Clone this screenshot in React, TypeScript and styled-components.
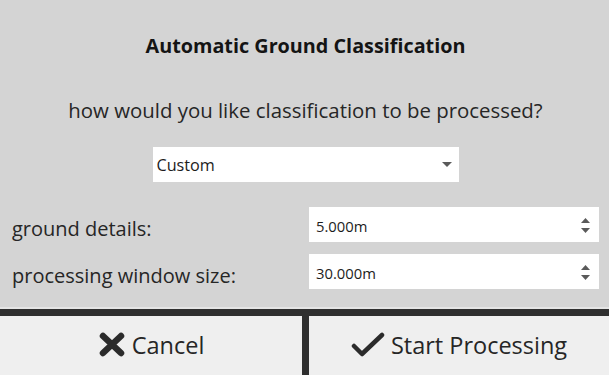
import React from 'react';
import styled, { createGlobalStyle } from 'styled-components';

const GlobalStyle = createGlobalStyle`
  html, body {
    margin: 0;
    padding: 0;
    width: 100%;
    height: 100%;
    overflow: hidden;
  }
  #root {
    width: 100%;
    height: 100%;
  }
  * {
    box-sizing: border-box;
  }
`;

const StyledDialog = styled.div`
  display: flex;
  flex-direction: column;
  width: 609px;
  height: 375px;
  background-color: #d4d4d4;
  font-family: 'Open Sans', 'Noto Sans', sans-serif;
  color: #1c1c1c;
`;

const StyledBody = styled.div`
  flex: 1;
  display: flex;
  flex-direction: column;
  align-items: center;
  padding: 34px 10px 0 12px;
`;

const StyledTitle = styled.h1`
  margin: 0;
  font-size: 19.8px;
  font-weight: 700;
  line-height: 24px;
  color: #141414;
`;

const StyledQuestion = styled.p`
  margin: 40px 0 0;
  font-size: 20.4px;
  line-height: 24px;
  color: #262626;
`;

const StyledSelect = styled.div`
  display: flex;
  align-items: center;
  justify-content: space-between;
  width: 306px;
  height: 35px;
  margin-top: 25px;
  padding: 0 7px 0 4px;
  background-color: #fff;
  font-size: 16.2px;
`;

const StyledRows = styled.div`
  display: flex;
  flex-direction: column;
  gap: 12px;
  width: 100%;
  margin-top: 25px;
`;

const StyledRow = styled.div`
  display: flex;
  align-items: center;
  justify-content: space-between;
`;

const StyledLabel = styled.span`
  padding-top: 8px;
  font-size: 20px;
  color: #262626;
`;

const StyledSpin = styled.div`
  display: flex;
  align-items: center;
  justify-content: space-between;
  width: 290px;
  height: 35px;
  padding: 2px 9px 0 7px;
  background-color: #fff;
  font-size: 14.8px;
`;

const StyledArrows = styled.div`
  display: flex;
  flex-direction: column;
  gap: 5px;
`;

const StyledFooter = styled.div`
  display: grid;
  grid-template-columns: 302px 7px 1fr;
  height: 68px;
  border-top: 2px solid #e4e4e4;
`;

const StyledDivider = styled.div`
  background-color: #2f2f2f;
`;

const StyledButton = styled.button`
  display: flex;
  align-items: center;
  justify-content: center;
  gap: 6px;
  margin: 0;
  padding: 0 0 2px;
  border: none;
  border-top: 7px solid #2f2f2f;
  background-color: #efefef;
  font-family: inherit;
  font-size: 23.5px;
  color: #262626;
  cursor: pointer;
`;

const Caret = ({ up, width = 9 }: { up?: boolean; width?: number }) => (
  <svg width={width} height="5" viewBox={`0 0 ${width} 5`}>
    <path
      d={up ? `M0 5 L${width / 2} 0 L${width} 5 Z` : `M0 0 L${width / 2} 5 L${width} 0 Z`}
      fill="#5a5a5a"
    />
  </svg>
);

const SpinBox = ({ value }: { value: string }) => (
  <StyledSpin>
    <span>{value}</span>
    <StyledArrows>
      <Caret up />
      <Caret />
    </StyledArrows>
  </StyledSpin>
);

const CrossIcon = () => (
  <svg width="28" height="25" viewBox="0 0 28 25">
    <path
      d="M5 4 L23 21 M23 4 L5 21"
      stroke="#2b2b2b"
      strokeWidth="6.5"
      strokeLinecap="round"
    />
  </svg>
);

const CheckIcon = () => (
  <svg width="34" height="26" viewBox="0 0 34 26">
    <path
      d="M3 14 L11 22 L31 3"
      fill="none"
      stroke="#2b2b2b"
      strokeWidth="4.5"
      strokeLinecap="round"
      strokeLinejoin="round"
    />
  </svg>
);

const App: React.FC = () => {
  return (
    <>
      <GlobalStyle />
      <StyledDialog>
        <StyledBody>
          <StyledTitle>Automatic Ground Classification</StyledTitle>
          <StyledQuestion>how would you like classification to be processed?</StyledQuestion>
          <StyledSelect>
            <span>Custom</span>
            <Caret width={10} />
          </StyledSelect>
          <StyledRows>
            <StyledRow>
              <StyledLabel>ground details:</StyledLabel>
              <SpinBox value="5.000m" />
            </StyledRow>
            <StyledRow>
              <StyledLabel>processing window size:</StyledLabel>
              <SpinBox value="30.000m" />
            </StyledRow>
          </StyledRows>
        </StyledBody>
        <StyledFooter>
          <StyledButton>
            <CrossIcon />
            Cancel
          </StyledButton>
          <StyledDivider />
          <StyledButton>
            <CheckIcon />
            Start Processing
          </StyledButton>
        </StyledFooter>
      </StyledDialog>
    </>
  );
};

export default App;
